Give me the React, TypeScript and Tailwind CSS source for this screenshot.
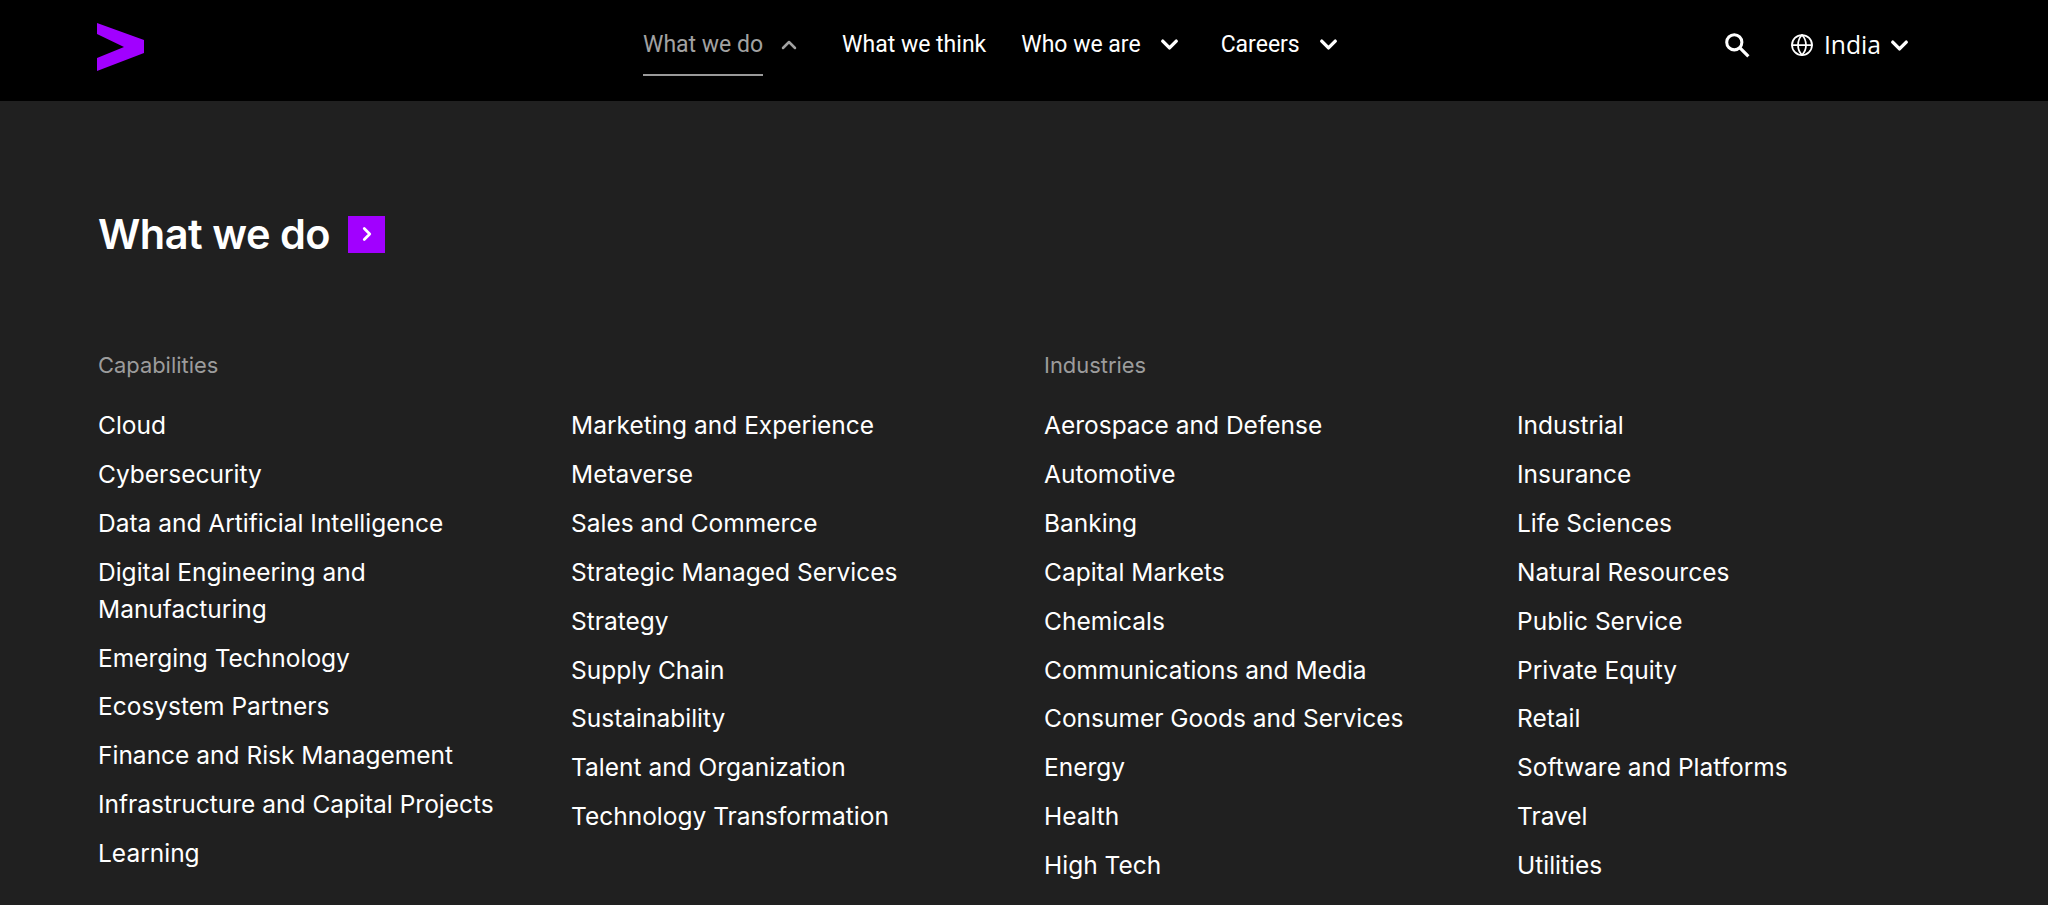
import { ChevronDown, ChevronUp, ChevronRight, Globe } from 'lucide-react';

const columns = [
  {
    label: 'Capabilities',
    items: [
      'Cloud',
      'Cybersecurity',
      'Data and Artificial Intelligence',
      'Digital Engineering and Manufacturing',
      'Emerging Technology',
      'Ecosystem Partners',
      'Finance and Risk Management',
      'Infrastructure and Capital Projects',
      'Learning',
    ],
  },
  {
    label: '',
    items: [
      'Marketing and Experience',
      'Metaverse',
      'Sales and Commerce',
      'Strategic Managed Services',
      'Strategy',
      'Supply Chain',
      'Sustainability',
      'Talent and Organization',
      'Technology Transformation',
    ],
  },
  {
    label: 'Industries',
    items: [
      'Aerospace and Defense',
      'Automotive',
      'Banking',
      'Capital Markets',
      'Chemicals',
      'Communications and Media',
      'Consumer Goods and Services',
      'Energy',
      'Health',
      'High Tech',
    ],
  },
  {
    label: '',
    items: [
      'Industrial',
      'Insurance',
      'Life Sciences',
      'Natural Resources',
      'Public Service',
      'Private Equity',
      'Retail',
      'Software and Platforms',
      'Travel',
      'Utilities',
    ],
  },
];

export default function App() {
  return (
    <div className="h-[905px] overflow-hidden bg-[#202020] font-['Inter',sans-serif] text-white">
      {/* Top nav */}
      <header className="flex h-[101px] items-start bg-black pl-[97px]">
        <svg viewBox="0 0 47 48" className="mt-[23px] h-[48px] w-[47px]" fill="#a100ff">
          <path d="M0 0L47 17V30L0 48V35L27 24L0 11Z" />
        </svg>
        <nav className="ml-[499px] flex items-start font-['Roboto',sans-serif] text-[23px] leading-[30px]">
          <div className="mt-[30px] flex items-start">
            <span className="border-b-2 border-[#9a9a9a] pb-[14px] text-[#a2a2a2]">What we do</span>
            <ChevronUp className="ml-[14px] mt-[3px] h-[24px] w-[24px] text-[#a2a2a2]" strokeWidth={2.5} />
          </div>
          <span className="ml-[41px] mt-[30px]">What we think</span>
          <div className="ml-[35px] mt-[30px] flex items-start">
            <span>Who we are</span>
            <ChevronDown className="ml-[15px] mt-[1px] h-[27px] w-[27px]" strokeWidth={3} />
          </div>
          <div className="ml-[38px] mt-[30px] flex items-start">
            <span>Careers</span>
            <ChevronDown className="ml-[15px] mt-[1px] h-[27px] w-[27px]" strokeWidth={3} />
          </div>
        </nav>
        <div className="ml-auto mr-[135px] mt-[30px] flex items-center">
          <svg viewBox="0 0 24 24" className="h-[26px] w-[26px]" fill="none" stroke="currentColor">
            <circle cx="9.5" cy="9.5" r="7" strokeWidth="2.8" />
            <path d="M14.5 14.5L22.5 22.5" strokeWidth="3" />
          </svg>
          <Globe className="ml-[40px] h-[24px] w-[24px]" strokeWidth={1.75} />
          <span className="ml-[10px] font-['Open_Sans',sans-serif] text-[24.7px] leading-[30px]">India</span>
          <ChevronDown className="ml-[5px] h-[27px] w-[27px]" strokeWidth={3} />
        </div>
      </header>

      <main className="px-[98px]">
        <div className="mt-[108px] flex h-[50px] items-center">
          <h1 className="text-[41.5px] font-semibold leading-[50px] tracking-[-0.5px]">What we do</h1>
          <span className="ml-[18px] flex h-[37px] w-[37px] items-center justify-center bg-[#a100ff]">
            <ChevronRight className="h-[22px] w-[22px]" strokeWidth={3} />
          </span>
        </div>

        <div className="mt-[91px] grid grid-cols-[473px_473px_473px_473px]">
          {columns.map((col, i) => (
            <div key={i}>
              <div className="h-[30px] text-[21.9px] leading-[30px] text-[#9c9c9c]">{col.label}</div>
              <ul className="mt-[27px] flex flex-col gap-[12px] pr-[40px] text-[24.5px] leading-[36.9px]">
                {col.items.map((item) => (
                  <li key={item}>{item}</li>
                ))}
              </ul>
            </div>
          ))}
        </div>
      </main>
    </div>
  );
}
